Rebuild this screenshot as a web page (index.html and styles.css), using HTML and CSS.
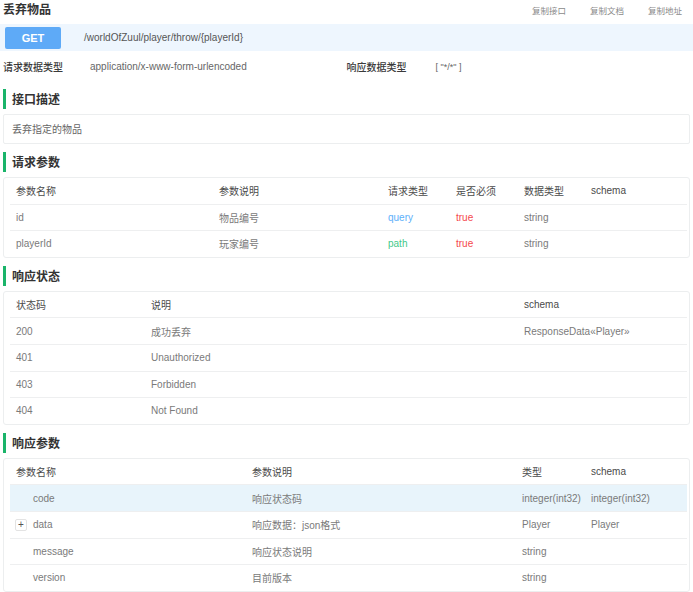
FILE: index.html
```html
<!DOCTYPE html>
<html lang="zh-CN">
<head>
<meta charset="utf-8">
<title>丢弃物品</title>
<link rel="stylesheet" href="styles.css">
</head>
<body>
<div class="page">
  <div class="top">
    <h1 class="title">丢弃物品</h1>
    <div class="actions">
      <a class="action">复制接口</a>
      <a class="action">复制文档</a>
      <a class="action">复制地址</a>
    </div>
  </div>

  <div class="urlbar">
    <span class="method">GET</span>
    <span class="path">/worldOfZuul/player/throw/{playerId}</span>
  </div>

  <div class="types">
    <div class="type-item">
      <span class="type-label">请求数据类型</span>
      <span class="type-value">application/x-www-form-urlencoded</span>
    </div>
    <div class="type-item type-item-right">
      <span class="type-label">响应数据类型</span>
      <span class="type-value type-value-right">[ "*/*" ]</span>
    </div>
  </div>

  <h2 class="sec">接口描述</h2>
  <div class="desc">丢弃指定的物品</div>

  <h2 class="sec">请求参数</h2>
  <div class="box">
    <div class="row head cols-req">
      <span>参数名称</span><span>参数说明</span><span>请求类型</span><span>是否必须</span><span>数据类型</span><span>schema</span>
    </div>
    <div class="row cols-req">
      <span>id</span><span>物品编号</span><span class="t-query">query</span><span class="t-true">true</span><span>string</span><span></span>
    </div>
    <div class="row cols-req">
      <span>playerId</span><span>玩家编号</span><span class="t-path">path</span><span class="t-true">true</span><span>string</span><span></span>
    </div>
  </div>

  <h2 class="sec">响应状态</h2>
  <div class="box">
    <div class="row head cols-status">
      <span>状态码</span><span>说明</span><span>schema</span>
    </div>
    <div class="row cols-status">
      <span>200</span><span>成功丢弃</span><span>ResponseData«Player»</span>
    </div>
    <div class="row cols-status">
      <span>401</span><span>Unauthorized</span><span></span>
    </div>
    <div class="row cols-status">
      <span>403</span><span>Forbidden</span><span></span>
    </div>
    <div class="row cols-status">
      <span>404</span><span>Not Found</span><span></span>
    </div>
  </div>

  <h2 class="sec">响应参数</h2>
  <div class="box">
    <div class="row head cols-resp">
      <span>参数名称</span><span>参数说明</span><span>类型</span><span>schema</span>
    </div>
    <div class="row cols-resp row-active">
      <span class="name-cell"><i class="expander-slot"></i>code</span><span>响应状态码</span><span>integer(int32)</span><span>integer(int32)</span>
    </div>
    <div class="row cols-resp">
      <span class="name-cell"><i class="expander-slot expander">+</i>data</span><span>响应数据：json格式</span><span>Player</span><span>Player</span>
    </div>
    <div class="row cols-resp">
      <span class="name-cell"><i class="expander-slot"></i>message</span><span>响应状态说明</span><span>string</span><span></span>
    </div>
    <div class="row cols-resp">
      <span class="name-cell"><i class="expander-slot"></i>version</span><span>目前版本</span><span>string</span><span></span>
    </div>
  </div>
</div>
</body>
</html>
```

FILE: styles.css
```css
* { box-sizing: border-box; }

html, body {
  margin: 0;
  padding: 0;
  background: #ffffff;
}

body {
  font-family: "Liberation Sans", "Noto Sans CJK SC", sans-serif;
  font-size: 10px;
  color: #555;
}

.page {
  width: 693px;
  padding-right: 3px;
}

.top {
  display: flex;
  align-items: center;
  justify-content: space-between;
  height: 17px;
  margin-bottom: 7px;
}

.title {
  margin: 0 0 0 3px;
  font-size: 12px;
  font-weight: bold;
  line-height: 17px;
  color: #333;
  font-family: "Noto Sans CJK SC", sans-serif;
}

.actions {
  display: flex;
  gap: 24px;
  padding-right: 8px;
  padding-top: 3px;
}

.action {
  font-size: 8.5px;
  color: #8a8a8a;
  font-family: "Noto Sans CJK SC", sans-serif;
}

.urlbar {
  display: flex;
  align-items: center;
  height: 27px;
  padding: 0 5px;
  background: #eef6fe;
  margin-right: -3px;
}

.method {
  display: flex;
  align-items: center;
  justify-content: center;
  width: 56px;
  height: 22px;
  border-radius: 2px;
  background: #5eaaf7;
  color: #fff;
  font-weight: bold;
  font-size: 11px;
}

.path {
  margin-left: 23px;
  font-size: 10px;
  color: #555;
}

.types {
  display: flex;
  align-items: center;
  height: 15px;
  margin-top: 8px;
  padding-left: 3px;
}

.type-item {
  display: flex;
  align-items: center;
  width: 346px;
}

.type-label {
  width: 87px;
  font-weight: 500;
  color: #3a3a3a;
  font-family: "Noto Sans CJK SC", sans-serif;
  font-size: 10px;
}

.type-value {
  color: #666;
}

.type-value-right {
  font-size: 9px;
  padding-left: 2px;
}

.sec {
  margin: 8px 0 5px 3px;
  height: 20px;
  line-height: 20px;
  border-left: 3px solid #1ab46a;
  padding-left: 6px;
  font-size: 12px;
  font-weight: bold;
  color: #333;
  font-family: "Noto Sans CJK SC", sans-serif;
}

.types + .sec {
  margin-top: 15px;
}

.desc {
  margin-left: 3px;
  height: 30px;
  line-height: 28px;
  padding-left: 8px;
  border: 1px solid #eceeef;
  border-radius: 2px;
  color: #666;
  font-family: "Noto Sans CJK SC", sans-serif;
}

.box {
  margin-left: 3px;
  border: 1px solid #eceeef;
  border-radius: 3px;
  padding: 0 2px 0 6px;
}

.row {
  display: grid;
  align-items: center;
  height: 26.6px;
  border-bottom: 1px solid #eeeff0;
  color: #7a7a7a;
}

.row:last-child {
  height: 25.6px;
  border-bottom: none;
}

.row > span {
  padding-left: 6px;
  white-space: nowrap;
}

.head {
  color: #4a4a4a;
}

.cols-req {
  grid-template-columns: 203px 169px 68px 68px 67px 1fr;
}

.cols-status {
  grid-template-columns: 135px 373px 1fr;
}

.cols-resp {
  grid-template-columns: 236px 270px 69px 1fr;
}

.row-active {
  background: #e8f4fb;
}

.name-cell {
  display: flex;
  align-items: center;
}

.row > .name-cell {
  padding-left: 5px;
}

.expander-slot {
  display: inline-block;
  width: 12px;
  height: 12px;
  margin-right: 6px;
  font-style: normal;
}

.expander {
  border: 1px solid #e3e3e3;
  border-radius: 2px;
  text-align: center;
  line-height: 10px;
  font-size: 10px;
  font-family: "Liberation Sans", sans-serif;
  color: #555;
}

.t-query { color: #5eb0fa; }
.t-path { color: #3fc98a; }
.t-true { color: #f5484c; }
```
